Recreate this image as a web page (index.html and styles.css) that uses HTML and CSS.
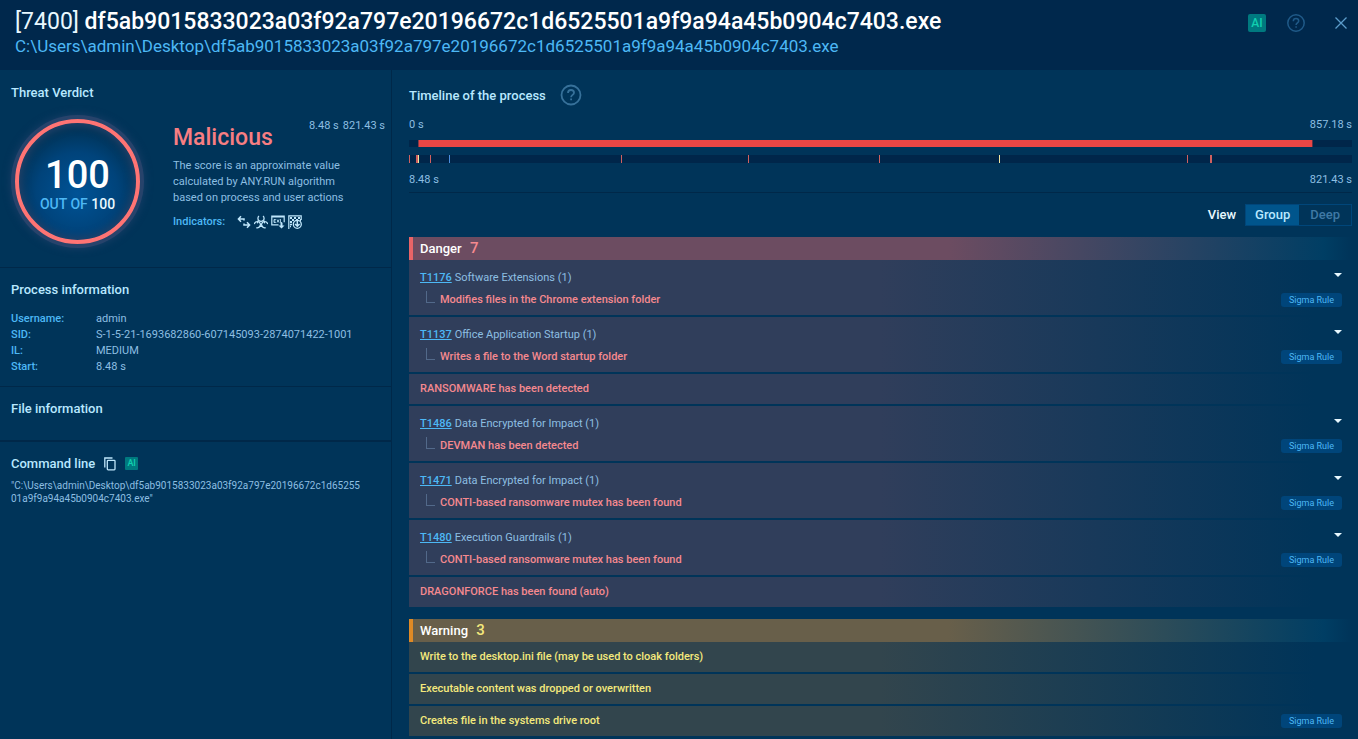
FILE: index.html
```html
<!DOCTYPE html>
<html lang="en">
<head>
<meta charset="utf-8">
<title>Process details</title>
<link rel="stylesheet" href="styles.css">
</head>
<body>
<header class="top">
  <div class="top-text">
    <h1 class="title">[7400] <strong>df5ab9015833023a03f92a797e20196672c1d6525501a9f9a94a45b0904c7403.exe</strong></h1>
    <p class="path">C:\Users\admin\Desktop\df5ab9015833023a03f92a797e20196672c1d6525501a9f9a94a45b0904c7403.exe</p>
  </div>
  <div class="tools">
    <button class="ai ai-large" type="button">AI</button>
    <button class="icon-btn" type="button" aria-label="Help"><svg width="20" height="20" viewBox="0 0 20 20" fill="none" stroke="#1f5a88" stroke-width="1.5"><circle cx="10" cy="10" r="8.2"/><path d="M7.3 8.2c0-1.6 1.1-2.7 2.7-2.7s2.7 1 2.7 2.4c0 1.9-2.6 2-2.6 4.1M10.1 13.3v1.5"/></svg></button>
    <button class="icon-btn close" type="button" aria-label="Close"><svg width="14" height="14" viewBox="0 0 14 14" fill="none" stroke="#5b9ccb" stroke-width="1.3"><path d="M1.5 1.5l11 11M12.5 1.5l-11 11"/></svg></button>
  </div>
</header>
<main class="layout">
  <aside class="side">
    <section class="block verdict">
      <h2 class="heading">Threat Verdict</h2>
      <div class="verdict-body">
        <div class="score">
          <span class="score-num">100</span>
          <span class="score-of">OUT OF <b>100</b></span>
        </div>
        <div class="verdict-text">
          <div class="verdict-head"><h3 class="level">Malicious</h3><span class="times"><span>8.48 s</span><span>821.43 s</span></span></div>
          <p class="note">The score is an approximate value<br>calculated by ANY.RUN algorithm<br>based on process and user actions</p>
          <div class="indicators"><span class="label">Indicators:</span>
            <span class="icons">
              <svg width="14" height="14" viewBox="0 0 14 14" fill="none" stroke="#bfe6fb" stroke-width="1.5"><path d="M4 1.2L1.4 4L4 6.8M1.6 4H7v1.5M10 7.2l2.6 2.8L10 12.8M12.4 10H7V8.5"/></svg>
              <svg width="14" height="14" viewBox="0 0 24 24" fill="none" stroke="#bfe6fb" stroke-width="2.2"><path d="M8.5 1.8A5.3 5.3 0 1 0 15.5 1.8"/><path d="M8.5 1.8A5.3 5.3 0 1 0 15.5 1.8" transform="rotate(120 12 13)"/><path d="M8.5 1.8A5.3 5.3 0 1 0 15.5 1.8" transform="rotate(240 12 13)"/><path d="M7 9.5a6.5 6.5 0 0 0-1 5M17 9.5a6.5 6.5 0 0 1 1 5M9 19a6.5 6.5 0 0 0 6 0" stroke-width="1.8"/></svg>
              <svg width="14" height="14" viewBox="0 0 14 14" fill="none" stroke="#bfe6fb"><path d="M7.5 9.8H.8V1.2h12.4v6M.8 2h12.4" stroke-width="1.2"/><path d="M4.8 4.5H3v3h1.8M3 6h1.6M6 4.5l2 3M8 4.5l-2 3M9.4 4v3.5H11.2" stroke-width=".9"/><path d="M9.5 8v2.5H7.5L10.5 13.5l3-3h-2V8z" fill="#bfe6fb" stroke="none"/></svg>
              <svg width="14" height="14" viewBox="0 0 14 14" fill="none" stroke="#bfe6fb"><path d="M.8 14V.8h12.4V5" stroke-width="1.2"/><path d="M2 3h11M2 7h4M4 5h9" stroke-width="2" stroke-dasharray="2 2"/><path d="M2 9.5h2M2 11.5h1" stroke-width="1.5"/><circle cx="9.3" cy="9.3" r="4" fill="#003459" stroke-width="1.3"/><path d="M9.3 5.5v5.5M7 9l2.3 2.2L11.6 9" stroke-width="1.5"/></svg>
            </span>
          </div>
        </div>
      </div>
    </section>
    <section class="block process">
      <h2 class="heading">Process information</h2>
      <dl class="facts">
        <dt>Username:</dt><dd>admin</dd>
        <dt>SID:</dt><dd>S-1-5-21-1693682860-607145093-2874071422-1001</dd>
        <dt>IL:</dt><dd>MEDIUM</dd>
        <dt>Start:</dt><dd>8.48 s</dd>
      </dl>
    </section>
    <section class="block file"><h2 class="heading">File information</h2></section>
    <section class="block command">
      <div class="command-head">
        <h2 class="heading">Command line</h2>
        <button class="icon-btn" type="button" aria-label="Copy"><svg width="12" height="14" viewBox="0 0 12 14" fill="none" stroke="#bfe6fb" stroke-width="1.3"><path d="M.8 10.5V1h7.7"/><rect x="3.3" y="3.3" width="7.7" height="9.5" rx=".8"/></svg></button>
        <button class="ai" type="button">AI</button>
      </div>
      <p class="cmd">"C:\Users\admin\Desktop\df5ab9015833023a03f92a797e20196672c1d6525501a9f9a94a45b0904c7403.exe"</p>
    </section>
  </aside>
  <section class="content">
    <div class="timeline">
      <div class="timeline-head">
        <h2 class="heading">Timeline of the process</h2>
        <button class="icon-btn" type="button" aria-label="About the timeline"><svg width="22" height="22" viewBox="0 0 22 22" fill="none" stroke="#37719a" stroke-width="1.8"><circle cx="11" cy="11" r="9.5"/><path d="M8 9c0-1.8 1.2-3 3-3s3 1.1 3 2.7c0 2.1-2.9 2.3-2.9 4.5M11.1 14.5v1.8"/></svg></button>
      </div>
      <div class="range"><span>0 s</span><span>857.18 s</span></div>
      <svg class="track" width="100%" height="7"><rect x="1%" width="94.8%" height="7" fill="#ea4645"/></svg>
      <svg class="track events" width="100%" height="8" shape-rendering="crispEdges">
        <g fill="#d0605f"><rect width="1" height="8"/><rect x="0.7%" width="2" height="8"/><rect x="2.25%" width="1" height="8"/><rect x="22.5%" width="1" height="8"/><rect x="35.9%" width="1" height="8"/><rect x="49.8%" width="1" height="8"/><rect x="82.5%" width="1" height="8"/><rect x="84.9%" width="2" height="8"/></g>
        <g fill="#f3e6a0"><rect x="1%" width="1" height="8"/><rect x="62.6%" width="1" height="8"/></g>
        <rect x="4.2%" width="1" height="8" fill="#4b8fe0"/>
      </svg>
      <div class="range"><span>8.48 s</span><span>821.43 s</span></div>
    </div>
    <div class="view"><span class="view-label">View</span><div class="switch"><button class="on" type="button">Group</button><button type="button">Deep</button></div></div>
    <section class="group danger">
      <h2 class="group-head">Danger <span>7</span></h2>
      <ul class="rows">
        <li class="row"><p class="tech"><a href="#T1176">T1176</a> Software Extensions (1)<button class="caret" type="button" aria-label="Expand"></button></p><p class="event nested">Modifies files in the Chrome extension folder<span class="tag">Sigma Rule</span></p></li>
        <li class="row"><p class="tech"><a href="#T1137">T1137</a> Office Application Startup (1)<button class="caret" type="button" aria-label="Expand"></button></p><p class="event nested">Writes a file to the Word startup folder<span class="tag">Sigma Rule</span></p></li>
        <li class="row"><p class="event">RANSOMWARE has been detected</p></li>
        <li class="row"><p class="tech"><a href="#T1486">T1486</a> Data Encrypted for Impact (1)<button class="caret" type="button" aria-label="Expand"></button></p><p class="event nested">DEVMAN has been detected<span class="tag">Sigma Rule</span></p></li>
        <li class="row"><p class="tech"><a href="#T1471">T1471</a> Data Encrypted for Impact (1)<button class="caret" type="button" aria-label="Expand"></button></p><p class="event nested">CONTI-based ransomware mutex has been found<span class="tag">Sigma Rule</span></p></li>
        <li class="row"><p class="tech"><a href="#T1480">T1480</a> Execution Guardrails (1)<button class="caret" type="button" aria-label="Expand"></button></p><p class="event nested">CONTI-based ransomware mutex has been found<span class="tag">Sigma Rule</span></p></li>
        <li class="row"><p class="event">DRAGONFORCE has been found (auto)</p></li>
      </ul>
    </section>
    <section class="group warning">
      <h2 class="group-head">Warning <span>3</span></h2>
      <ul class="rows">
        <li class="row"><p class="event">Write to the desktop.ini file (may be used to cloak folders)</p></li>
        <li class="row"><p class="event">Executable content was dropped or overwritten</p></li>
        <li class="row"><p class="event">Creates file in the systems drive root<span class="tag">Sigma Rule</span></p></li>
      </ul>
    </section>
  </section>
</main>
</body>
</html>
```
FILE: styles.css
```css
* { box-sizing: border-box; margin: 0; padding: 0; }
body {
  min-height: 100vh;
  display: flex;
  flex-direction: column;
  background: #003459;
  color: #8dbfe2;
  font: 11px/16px Roboto, "Liberation Sans", sans-serif;
}
button { font: inherit; color: inherit; background: none; border: 0; cursor: pointer; }
ul { list-style: none; }
svg { display: block; }

.top {
  display: flex;
  justify-content: space-between;
  min-height: 70px;
  padding: 8px 10px 11px 15px;
  background: #00284c;
}
.title { font-size: 23px; line-height: 27px; font-weight: 400; color: #e8f8ff; }
.title strong { font-weight: 500; color: #fff; }
.path { font-size: 17px; line-height: 23px; color: #4db8f5; }
.tools { display: flex; align-items: center; height: 30px; gap: 20px; }
.close { margin-left: 8px; }
.icon-btn { display: flex; }
.ai {
  width: 13px;
  height: 13px;
  border-radius: 1px;
  background: #00797f;
  color: #10d0b0;
  font-size: 9px;
  line-height: 13px;
  font-weight: 500;
  text-align: center;
}
.ai-large { width: 18px; height: 18px; border-radius: 2px; font-size: 12px; line-height: 18px; }

.layout { flex: 1; display: flex; }
.side { flex: 0 0 392px; border-right: 1px solid #002849; }
.block { padding: 13px 6px 10px 11px; border-bottom: 1px solid #002849; }
.heading { font-size: 13px; line-height: 17px; font-weight: 500; color: #b8e8ff; }

.verdict { min-height: 198px; padding-top: 14px; }
.verdict-body { display: flex; gap: 33px; padding-top: 18px; }
.score {
  flex: none;
  display: flex;
  flex-direction: column;
  align-items: center;
  width: 125px;
  height: 125px;
  margin-left: 4px;
  padding-top: 34px;
  border: 4px solid #ff7474;
  border-radius: 50%;
  background: radial-gradient(circle at 50% 60%, #005396 0%, #00437a 45%, #003459 70%);
  box-shadow: 0 0 0 4px #27436b, 0 0 9px 4px #1c3f68, inset 0 0 8px 2px #27436b;
}
.score-num { font-size: 38px; line-height: 36px; font-weight: 500; color: #fff; }
.score-of { font-size: 14px; line-height: 18px; font-weight: 500; color: #4db8f5; padding-top: 2px; white-space: nowrap; }
.score-of b { font-weight: 500; color: #e8f8ff; }
.verdict-text { flex: 1; }
.verdict-head { display: flex; justify-content: space-between; }
.level { padding-top: 5px; font-size: 23px; line-height: 28px; font-weight: 500; color: #f77e82; }
.times { display: flex; gap: 4px; line-height: 13px; }
.note { padding-top: 6px; }
.indicators { display: flex; align-items: center; gap: 12px; padding-top: 8px; }
.label { font-weight: 500; color: #4db8f5; }
.icons { display: flex; gap: 3px; }

.process { min-height: 119px; }
.facts { display: grid; grid-template-columns: 85px 1fr; padding-top: 13px; }
.facts dt { font-weight: 500; color: #4db8f5; }
.file { min-height: 55px; border-bottom: 2px solid #002849; }
.command { border: 0; }
.command-head { display: flex; align-items: center; gap: 9px; }
.cmd { padding: 7px 21px 0 0; font-size: 10px; line-height: 13px; word-break: break-all; }

.content { flex: 1; min-width: 0; padding: 14px 6px 0 17px; }
.timeline { border-bottom: 1px solid #002849; padding-bottom: 4px; }
.timeline-head { display: flex; align-items: center; gap: 14px; height: 22px; }
.range { display: flex; justify-content: space-between; padding-top: 11px; }
.track { margin-top: 7px; background: #00264a; }
.events { margin-top: 8px; }
.events + .range { padding-top: 9px; }
.view { display: flex; justify-content: flex-end; align-items: center; gap: 9px; padding: 11px 0; font-size: 13px; font-weight: 500; }
.view-label { color: #e8f8ff; }
.switch { display: flex; border: 1px solid #00467a; }
.switch button { height: 20px; padding: 0 11px; line-height: 20px; color: #3f79a5; }
.switch .on { padding: 0 9px; background: #00558c; color: #b8e8ff; }

.group { margin-bottom: 12px; }
.group-head {
  padding-left: 7px;
  border-left: 4px solid #e96467;
  font-size: 13px;
  line-height: 23px;
  font-weight: 500;
  color: #fff;
}
.group-head span { margin-left: 5px; font-size: 15px; }
.rows { display: flex; flex-direction: column; gap: 2px; }
.row { padding: 7px 10px 7px 11px; }
.tech { display: flex; gap: 3px; padding-top: 3px; }
.tech a { color: #4db8f5; font-weight: 500; }
.caret {
  width: 8px;
  height: 4px;
  margin: 3px 0 0 auto;
  background: #e8f8ff;
  clip-path: polygon(0 0, 100% 0, 50% 100%);
}
.event { display: flex; align-items: center; font-weight: 500; }
.nested { padding-top: 5px; }
.nested::before {
  content: "";
  width: 8px;
  height: 11px;
  margin: 0 5px 5px 6px;
  border: solid #52698a;
  border-width: 0 0 1px 1px;
}
.tag {
  margin-left: auto;
  padding: 0 8px;
  border-radius: 3px;
  background: #00457a;
  color: #4db8f5;
  font-size: 9px;
  line-height: 14px;
  font-weight: 400;
}
.danger .group-head { background: linear-gradient(90deg, #6c4c61 57%, #003e64 97%, #003459); }
.danger .group-head span, .danger .event { color: #f5898f; }
.danger .row { background: linear-gradient(90deg, #303e5b 50%, #003459 96%); }
.warning .group-head { border-color: #e08a25; background: linear-gradient(90deg, #685f4a 57%, #003e64 97%, #003459); }
.warning .group-head span, .warning .event { color: #f4e97c; }
.warning .row { background: linear-gradient(90deg, #32454d 50%, #003459 96%); }
.danger .tag, .warning .tag { color: #4db8f5; }
```
